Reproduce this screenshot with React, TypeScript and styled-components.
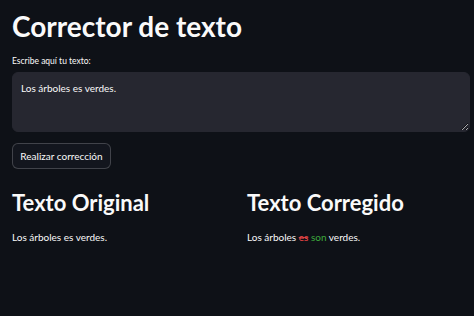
import React, { useState } from 'react';
import styled, { createGlobalStyle } from 'styled-components';

const GlobalStyle = createGlobalStyle`
  html, body {
    margin: 0;
    padding: 0;
    background: #0e1117;
  }
  body {
    font-family: Lato, "Noto Sans", sans-serif;
    color: #fafafa;
  }
`;

const Page = styled.div`
  width: 474px;
  height: 316px;
  box-sizing: border-box;
  padding: 8px 4px 0 12px;
  background: #0e1117;
  display: flex;
  flex-direction: column;
  overflow: hidden;
`;

const Title = styled.h1`
  margin: 0;
  font-size: 28px;
  font-weight: 700;
  line-height: 36px;
`;

const Label = styled.label`
  margin-top: 11px;
  font-size: 8.5px;
  line-height: 12px;
`;

const TextArea = styled.textarea`
  margin-top: 5px;
  height: 60px;
  box-sizing: border-box;
  padding: 7px 8px;
  background: #262730;
  border: 1px solid #262730;
  border-radius: 6px;
  color: #fafafa;
  font-family: Lato, "Noto Sans", sans-serif;
  font-size: 10px;
  line-height: 16px;
  resize: vertical;
  outline: none;
`;

const Button = styled.button`
  margin-top: 11px;
  align-self: flex-start;
  width: 99px;
  height: 26px;
  padding: 0 7px;
  background: #13161e;
  border: 1px solid rgba(250, 250, 250, 0.2);
  border-radius: 6px;
  color: #fafafa;
  font-family: Lato, "Noto Sans", sans-serif;
  font-size: 10px;
  cursor: pointer;
`;

const Columns = styled.div`
  margin-top: 20px;
  display: grid;
  grid-template-columns: 1fr 1fr;
  gap: 12px;
`;

const Column = styled.div`
  display: flex;
  flex-direction: column;
`;

const Heading = styled.h2`
  margin: 0;
  font-size: 22px;
  font-weight: 700;
  line-height: 28px;
`;

const Paragraph = styled.p`
  margin: 13px 0 0;
  font-size: 10px;
  line-height: 14px;
`;

const Removed = styled.span`
  color: #ff4b4b;
  text-decoration: line-through;
  text-decoration-color: rgba(255, 75, 75, 0.7);
`;

const Added = styled.span`
  color: #3dab3d;
`;

export default function App() {
  const [text, setText] = useState('Los árboles es verdes.');
  return (
    <Page>
      <GlobalStyle />
      <Title>Corrector de texto</Title>
      <Label>Escribe aquí tu texto:</Label>
      <TextArea value={text} onChange={(e) => setText(e.target.value)} />
      <Button>Realizar corrección</Button>
      <Columns>
        <Column>
          <Heading>Texto Original</Heading>
          <Paragraph>Los árboles es verdes.</Paragraph>
        </Column>
        <Column>
          <Heading>Texto Corregido</Heading>
          <Paragraph>
            Los árboles <Removed>es</Removed> <Added>son</Added> verdes.
          </Paragraph>
        </Column>
      </Columns>
    </Page>
  );
}
